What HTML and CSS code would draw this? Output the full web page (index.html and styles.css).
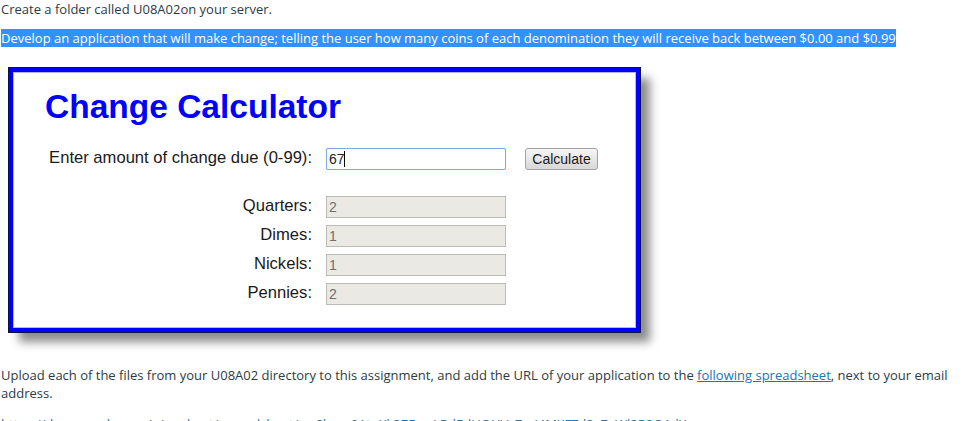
FILE: index.html
```html
<!DOCTYPE html>
<html>
<head>
<meta charset="utf-8">
<title>U08A02</title>
<link rel="stylesheet" href="styles.css">
</head>
<body>
<div class="page">
  <p class="p-first">Create a folder called U08A02on your server.</p>
  <p class="p-task"><span class="sel">Develop an application that will make change; telling the user how many coins of each denomination they will receive back between $0.00 and $0.99</span></p>

  <div class="shot">
    <h1 class="calc-title">Change Calculator</h1>
    <div class="calc-grid calc-main">
      <label class="calc-label">Enter amount of change due (0-99):</label>
      <span class="field-wrap">
        <input class="calc-input focused" type="text" value="67">
        <span class="caret"></span>
      </span>
      <button class="calc-btn" type="button">Calculate</button>
    </div>
    <div class="calc-grid calc-out">
      <label class="calc-label">Quarters:</label>
      <input class="calc-input readonly" type="text" value="2" readonly>
      <label class="calc-label">Dimes:</label>
      <input class="calc-input readonly" type="text" value="1" readonly>
      <label class="calc-label">Nickels:</label>
      <input class="calc-input readonly" type="text" value="1" readonly>
      <label class="calc-label">Pennies:</label>
      <input class="calc-input readonly" type="text" value="2" readonly>
    </div>
  </div>

  <p class="p-upload">Upload each of the files from your U08A02 directory to this assignment, and add the URL of your application to the <a class="link" href="#">following spreadsheet</a>, next to your email address.</p>
  <p class="p-url"><a class="link" href="#">https://docs.google.com/a/ccsd.net/spreadsheet/ccc?key=0AtqXk3ZFwnLBdEdHOUVvZmI4MXFTd2xZaWl3R2Q1dXc</a></p>
</div>
</body>
</html>
```

FILE: styles.css
```css
html, body {
  margin: 0;
  padding: 0;
  background: #ffffff;
}

body {
  height: 421px;
  overflow: hidden;
}

.page {
  padding: 0 0 0 1px;
  font-family: "Open Sans", "Noto Sans", sans-serif;
  font-size: 13px;
  line-height: 18px;
  color: #2d3b45;
}

.page p {
  margin: 0;
}

.p-first {
  margin-bottom: 11px !important;
}

.sel {
  background: #3390ff;
  color: #ffffff;
}

.shot {
  margin: 21px 0 0 8px;
  width: 631px;
  height: 264px;
  box-sizing: border-box;
  border: 4px solid #0000ff;
  background: #ffffff;
  box-shadow: 0 0 0 1px #101048, inset 0 0 0 1px #b8b8ff, 10px 10px 9px rgba(0, 0, 0, 0.45);
  padding: 16px 0 0 35px;
  font-family: "Liberation Sans", Arial, sans-serif;
}

.calc-title {
  margin: 0 0 22px -3px;
  font-size: 33.5px;
  line-height: 38px;
  font-weight: bold;
  color: #0000ff;
}

.calc-grid {
  display: grid;
  grid-template-columns: 264px 180px auto;
  column-gap: 14px;
  align-items: baseline;
}

.calc-main {
  margin-bottom: 26px;
}

.calc-out {
  grid-template-columns: 264px 180px;
  row-gap: 7px;
}

.calc-label {
  justify-self: end;
  white-space: nowrap;
  font-size: 16.6px;
  color: #1a1a1a;
  position: relative;
  top: -1px;
}

.field-wrap {
  position: relative;
  display: block;
}

.calc-input {
  display: block;
  width: 180px;
  height: 22px;
  box-sizing: border-box;
  margin: 0;
  padding: 0 2px;
  font-family: "Liberation Sans", Arial, sans-serif;
  font-size: 14px;
  outline: none;
}

.calc-input.focused {
  border: 1px solid #7fa9de;
  border-radius: 2px;
  background: #ffffff;
  color: #222222;
  box-shadow: 0 0 1px #a9c8ef;
}

.calc-input.readonly {
  border: 1px solid #bcbcb6;
  background: #ebe9e3;
  color: #6f6f6f;
}

.caret {
  position: absolute;
  left: 18px;
  top: 3px;
  width: 1px;
  height: 16px;
  background: #000000;
}

.calc-btn {
  margin-left: 5px;
  width: 73px;
  height: 22px;
  box-sizing: border-box;
  padding: 0;
  font-family: "Liberation Sans", Arial, sans-serif;
  font-size: 14px;
  color: #1a1a1a;
  border: 1px solid #a3a3a3;
  border-radius: 3px;
  background: linear-gradient(#f6f6f6, #e4e4e4 60%, #d8d8d8);
}

.p-upload {
  margin-top: 34px !important;
  padding-right: 20px;
}

.p-url {
  margin-top: 13px !important;
}

.link {
  color: #2075b0;
  text-decoration: underline;
}

.p-url .link {
  text-decoration: none;
}
```
